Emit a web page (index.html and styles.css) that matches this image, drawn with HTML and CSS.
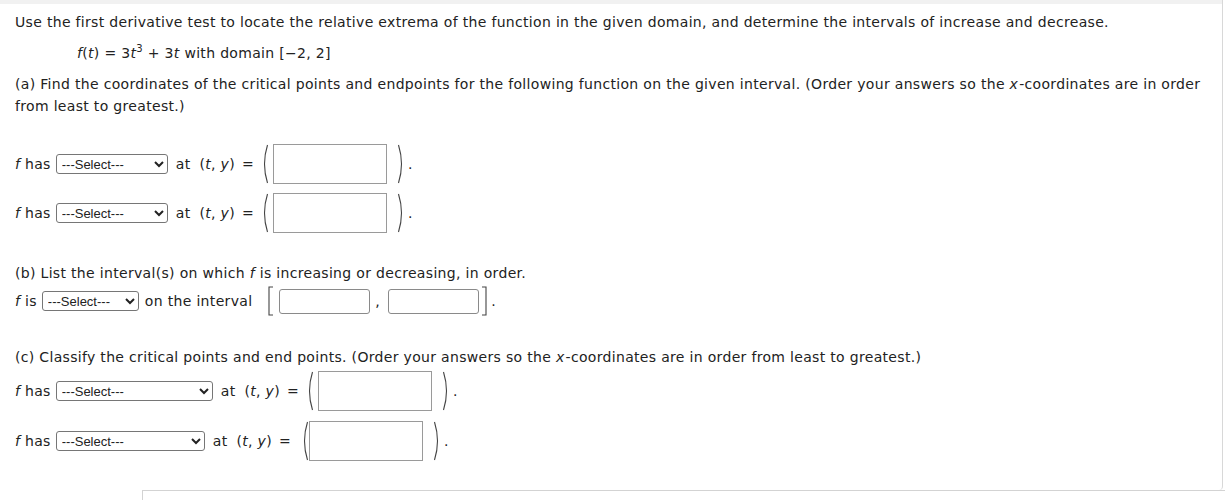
FILE: index.html
```html
<!DOCTYPE html>
<html>
<head>
<meta charset="utf-8">
<link rel="stylesheet" href="styles.css">
</head>
<body>
<div class="topbar"></div>
<div class="panel">
  <p class="line l1">Use the first derivative test to locate the relative extrema of the function in the given domain, and determine the intervals of increase and decrease.</p>
  <p class="line eq"><i>f</i>(<i>t</i>) = 3<i>t</i><sup>3</sup> + 3<i>t</i> with domain [−2, 2]</p>
  <p class="line pa"><span>(a) Find the coordinates of the critical points and endpoints for the following function on the given interval. (Order your answers so the </span><i class="xv">x</i><span>-coordinates are in order</span><br><span>from least to greatest.)</span></p>

  <div class="row r1">
    <span><i>f</i> has</span>
    <select class="sel w112"><option>---Select---</option></select>
    <span class="at">at</span><span class="ty">(<i>t</i>, <i>y</i>)</span><span class="eqs">=</span>
    <svg class="paren" width="8" height="40" viewBox="0 0 8 40"><path d="M6.5 1 Q0.5 20 6.5 39" /></svg>
    <input class="box" type="text">
    <svg class="paren rp" width="8" height="40" viewBox="0 0 8 40"><path d="M1.5 1 Q7.5 20 1.5 39" /></svg>
    <span class="dot">.</span>
  </div>
  <div class="row r2">
    <span><i>f</i> has</span>
    <select class="sel w112"><option>---Select---</option></select>
    <span class="at">at</span><span class="ty">(<i>t</i>, <i>y</i>)</span><span class="eqs">=</span>
    <svg class="paren" width="8" height="40" viewBox="0 0 8 40"><path d="M6.5 1 Q0.5 20 6.5 39" /></svg>
    <input class="box" type="text">
    <svg class="paren rp" width="8" height="40" viewBox="0 0 8 40"><path d="M1.5 1 Q7.5 20 1.5 39" /></svg>
    <span class="dot">.</span>
  </div>

  <p class="line pb">(b) List the interval(s) on which <i>f</i> is increasing or decreasing, in order.</p>
  <div class="row rb">
    <span><i>f</i> is</span>
    <select class="sel w97"><option>---Select---</option></select>
    <span class="on">on the interval</span>
    <svg class="brk" width="8" height="30" viewBox="0 0 8 30"><path d="M6 1 H2 V29 H6" /></svg>
    <input class="box sm" type="text">
    <span class="comma">,</span>
    <input class="box sm" type="text">
    <svg class="brk rb2" width="8" height="30" viewBox="0 0 8 30"><path d="M2 1 H6 V29 H2" /></svg>
    <span class="dot">.</span>
  </div>

  <p class="line pc">(c) Classify the critical points and end points. (Order your answers so the <i class="xv">x</i>-coordinates are in order from least to greatest.)</p>
  <div class="row c1">
    <span><i>f</i> has</span>
    <select class="sel w157"><option>---Select---</option></select>
    <span class="at">at</span><span class="ty">(<i>t</i>, <i>y</i>)</span><span class="eqs">=</span>
    <svg class="paren" width="8" height="40" viewBox="0 0 8 40"><path d="M6.5 1 Q0.5 20 6.5 39" /></svg>
    <input class="box" type="text">
    <svg class="paren rp" width="8" height="40" viewBox="0 0 8 40"><path d="M1.5 1 Q7.5 20 1.5 39" /></svg>
    <span class="dot">.</span>
  </div>
  <div class="row c2">
    <span><i>f</i> has</span>
    <select class="sel w149"><option>---Select---</option></select>
    <span class="at">at</span><span class="ty">(<i>t</i>, <i>y</i>)</span><span class="eqs">=</span>
    <svg class="paren wide" width="8" height="40" viewBox="0 0 8 40"><path d="M6.5 1 Q0.5 20 6.5 39" /></svg>
    <input class="box near" type="text">
    <svg class="paren rp" width="8" height="40" viewBox="0 0 8 40"><path d="M1.5 1 Q7.5 20 1.5 39" /></svg>
    <span class="dot">.</span>
  </div>
</div>
<div class="lower"></div>
</body>
</html>
```
FILE: styles.css
```css
html, body {
  margin: 0;
  padding: 0;
  background: #fff;
}
body {
  font-family: "DejaVu Sans", Verdana, sans-serif;
  font-size: 14px;
  letter-spacing: 0.32px;
  color: #222;
  width: 1225px;
  height: 500px;
  overflow: hidden;
}
.topbar {
  width: 1222px;
  height: 4px;
  background: #f1f1f1;
  border-right: 1px solid #d8d8d8;
}
.panel {
  width: 1207px;
  padding: 7px 0 0 15px;
  height: 479px;
  border-right: 1px solid #d8d8d8;
  border-bottom-right-radius: 4px;
  box-sizing: content-box;
}
.line {
  margin: 0;
  line-height: 22px;
}
sup {
  font-size: 10px;
  line-height: 0;
  vertical-align: 6px;
}
.xv { padding-right: 1px; }
.eq {
  margin-top: 9px;
  padding-left: 62px;
}
.pa {
  margin-top: 9px;
}
.row {
  display: flex;
  align-items: center;
  height: 40px;
}
.r1 { margin-top: 27px; }
.r2 { margin-top: 9px; }
.pb { margin-top: 29px; }
.rb { margin-top: 3px; height: 28px; }
.pc { margin-top: 31px; }
.c1 { margin-top: 3px; }
.c2 { margin-top: 10px; }

.sel {
  font-family: "Liberation Sans", Arial, sans-serif;
  font-size: 13px;
  letter-spacing: 0;
  height: 20px;
  margin-left: 5px;
  padding: 0 0 0 1px;
  color: #222;
  background: #fff;
  border: 1px solid #767676;
  border-radius: 3px;
  box-sizing: border-box;
}
.w112 { width: 112px; }
.w97 { width: 97px; }
.w157 { width: 157px; }
.w149 { width: 149px; }
.at {
  margin-left: 8px;
}
.ty {
  margin-left: 9px;
}
.eqs {
  margin-left: 7px;
}
.paren {
  margin-left: 7px;
  flex: none;
}
.paren.wide { margin-left: 10px; }
.paren path, .brk path {
  fill: none;
  stroke: #444;
  stroke-width: 1.1;
}
.box {
  width: 114px;
  height: 40px;
  margin: 0 0 0 4px;
  box-sizing: border-box;
  border: 1px solid #9a9a9a;
  border-radius: 0;
  padding: 0;
  background: #fff;
}
.box.near { margin-left: 0; }
.rp { margin-left: 10px; }
.dot { margin-left: 3px; }
.on { margin-left: 6px; }
.brk { margin-left: 15px; flex: none; }
.box.sm {
  width: 91px;
  height: 25px;
  border-radius: 3px;
  border-color: #8a8a8a;
  margin-left: 4px;
}
.comma { margin: 0 4px 0 5px; }
.rb2 { margin-left: 1px; }
.lower {
  margin-left: 142px;
  height: 20px;
  border-top: 1px solid #d3d3d3;
  border-left: 1px solid #d3d3d3;
}
```
